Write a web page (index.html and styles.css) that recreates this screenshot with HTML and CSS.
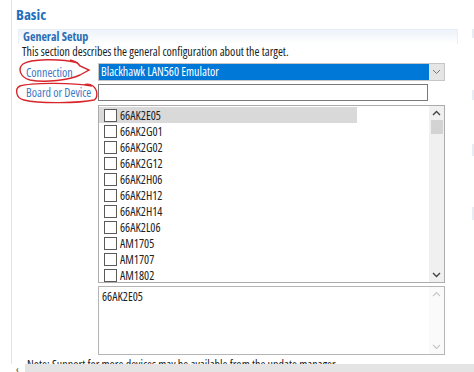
FILE: index.html
```html
<!DOCTYPE html>
<html lang="en">
<head>
  <meta charset="UTF-8" />
  <title>Basic</title>
  <link rel="stylesheet" href="styles.css">
</head>
<body>
  <div class="window">
    <div class="editor">
      <h1 class="title">Basic</h1>

      <div class="section">
        <div class="section-head">General Setup</div>
        <p class="desc">This section describes the general configuration about the target.</p>

        <div class="row">
          <span class="label">Connection</span>
          <div class="select">
            <span class="select-value">Blackhawk LAN560 Emulator</span>
            <span class="select-btn">
              <svg width="9" height="6" viewBox="0 0 9 6"><path d="M1 1l3.5 3.5L8 1" fill="none" stroke="#777" stroke-width="1"/></svg>
            </span>
          </div>
        </div>

        <div class="row">
          <span class="label">Board or Device</span>
          <div class="input"></div>
        </div>

        <div class="list">
          <ul class="items">
            <li class="item active"><span class="check"></span>66AK2E05</li>
            <li class="item"><span class="check"></span>66AK2G01</li>
            <li class="item"><span class="check"></span>66AK2G02</li>
            <li class="item"><span class="check"></span>66AK2G12</li>
            <li class="item"><span class="check"></span>66AK2H06</li>
            <li class="item"><span class="check"></span>66AK2H12</li>
            <li class="item"><span class="check"></span>66AK2H14</li>
            <li class="item"><span class="check"></span>66AK2L06</li>
            <li class="item"><span class="check"></span>AM1705</li>
            <li class="item"><span class="check"></span>AM1707</li>
            <li class="item"><span class="check"></span>AM1802</li>
          </ul>
          <div class="vscroll">
            <svg class="arrow" width="9" height="6" viewBox="0 0 9 6"><path d="M1 5l3.5-3.5L8 5" fill="none" stroke="#444" stroke-width="1.4"/></svg>
            <div class="thumb"></div>
            <div class="track"></div>
            <svg class="arrow" width="9" height="6" viewBox="0 0 9 6"><path d="M1 1l3.5 3.5L8 1" fill="none" stroke="#444" stroke-width="1.4"/></svg>
          </div>
        </div>

        <div class="details">
          <div class="details-text">66AK2E05</div>
          <div class="vscroll off">
            <svg class="arrow" width="9" height="6" viewBox="0 0 9 6"><path d="M1 5l3.5-3.5L8 5" fill="none" stroke="#c8c8c8" stroke-width="1.2"/></svg>
            <div class="track"></div>
            <svg class="arrow" width="9" height="6" viewBox="0 0 9 6"><path d="M1 1l3.5 3.5L8 1" fill="none" stroke="#c8c8c8" stroke-width="1.2"/></svg>
          </div>
        </div>

        <p class="note">Note: Support for more devices may be available from the update manager.</p>
      </div>

      <!-- red hand-drawn marks over the labels, page coordinates -->
      <svg class="marks" width="110" height="110" viewBox="0 0 110 110">
        <path d="M78 63 C60 58 30 59 23 64 C18 68 19 77 30 80 C45 83 70 80 80 75 L89 70 L80 66 C78 63 75 61 70 60" fill="none" stroke="#d8252c" stroke-width="1.4"/>
        <path d="M92 86 C70 82 30 83 20 86 C15 88 15 98 24 100 C40 104 80 103 94 100 C98 98 98 90 93 86 C90 84 86 84 84 85" fill="none" stroke="#d8252c" stroke-width="1.4"/>
      </svg>
    </div>
    <div class="side">
      <span class="side-bar b1"></span>
      <span class="side-bar b2"></span>
      <span class="side-bar b3"></span>
      <span class="side-bar b4"></span>
    </div>
  </div>

  <div class="hscroll">
    <span class="hscroll-left">‹</span>
    <div class="hscroll-track"></div>
  </div>
</body>
</html>
```

FILE: styles.css
```css
body {
  margin: 0;
  width: 474px;
  height: 372px;
  overflow: hidden;
  background: #fff;
  font-family: "Open Sans", "Noto Sans", sans-serif;
  font-stretch: 80%;
  font-size: 12px;
  color: #1a1a1a;
}
.window {
  display: flex;
  height: 364px;
  overflow: hidden;
}
.editor {
  position: relative;
  width: 459px;
  margin-left: 11px;
  border-left: 1px solid #e3e3e3;
}
.title {
  margin: 0;
  padding: 4px 0 0 4px;
  font-size: 15px;
  font-weight: bold;
  color: #1f6fbe;
  line-height: 20px;
}
.section {
  margin: 5px 0 0 6px;
  width: 440px;
}
.section-head {
  height: 14px;
  padding-left: 4px;
  border: 1px solid #e7eef6;
  border-bottom: none;
  background: linear-gradient(#edf3fa, #fff);
  color: #2a6db5;
  font-weight: bold;
  line-height: 14px;
}
.desc {
  margin: 1px 0 0 4px;
  line-height: 14px;
}
.row {
  display: flex;
  align-items: center;
  margin-top: 4px;
}
.row + .row {
  margin-top: 3px;
}
.label {
  width: 72px;
  padding-left: 8px;
  color: #3a78c6;
  white-space: nowrap;
}
.select {
  display: flex;
  width: 345px;
  height: 16px;
  border: 1px solid #c6c6c6;
}
.select-value {
  flex: 1;
  background: #0078d7;
  color: #fff;
  line-height: 16px;
  padding-left: 2px;
}
.select-btn {
  width: 15px;
  display: flex;
  align-items: center;
  justify-content: center;
  background: #e5e5e5;
}
.input {
  width: 328px;
  height: 15px;
  border: 1px solid #7a7a7a;
}
.list {
  display: flex;
  margin: 4px 0 0 80px;
  width: 345px;
  height: 176px;
  border: 1px solid #acacac;
}
.items {
  flex: 1;
  margin: 0;
  padding: 1px 0 0;
  list-style: none;
}
.item {
  display: flex;
  align-items: center;
  height: 16px;
  padding-left: 5px;
  color: #222;
}
.item.active {
  background: #d9d9d9;
  margin-right: 72px;
}
.check {
  width: 11px;
  height: 11px;
  border: 1px solid #5a5a5a;
  background: #fff;
  margin-right: 3px;
}
.vscroll {
  width: 15px;
  display: flex;
  flex-direction: column;
  align-items: center;
  background: #f0f0f0;
}
.vscroll .arrow {
  margin: 4px 0;
  flex: none;
}
.thumb {
  width: 12px;
  height: 14px;
  background: #d3d3d3;
}
.track {
  flex: 1;
}
.details {
  display: flex;
  margin: 3px 0 0 80px;
  width: 345px;
  height: 67px;
  border: 1px solid #b5b5b5;
}
.details-text {
  flex: 1;
  padding: 1px 0 0 3px;
  color: #222;
}
.vscroll.off {
  background: #fafafa;
}
.note {
  margin: 3px 0 0 9px;
  line-height: 13px;
  white-space: nowrap;
}
.marks {
  position: absolute;
  left: -12px;
  top: 0;
}
.side {
  position: relative;
  flex: 1;
}
.side-bar {
  position: absolute;
  left: 1px;
  width: 3px;
  background: #e6edf5;
}
.b1 { top: 29px; height: 9px; }
.b2 { top: 90px; height: 10px; }
.b3 { top: 144px; height: 12px; }
.b4 { top: 207px; height: 13px; }
.hscroll {
  display: flex;
  height: 8px;
}
.hscroll-left {
  width: 25px;
  padding-left: 16px;
  box-sizing: border-box;
  font-size: 10px;
  line-height: 10px;
  color: #333;
}
.hscroll-track {
  flex: 1;
  background: #e4e4e4;
}
```
